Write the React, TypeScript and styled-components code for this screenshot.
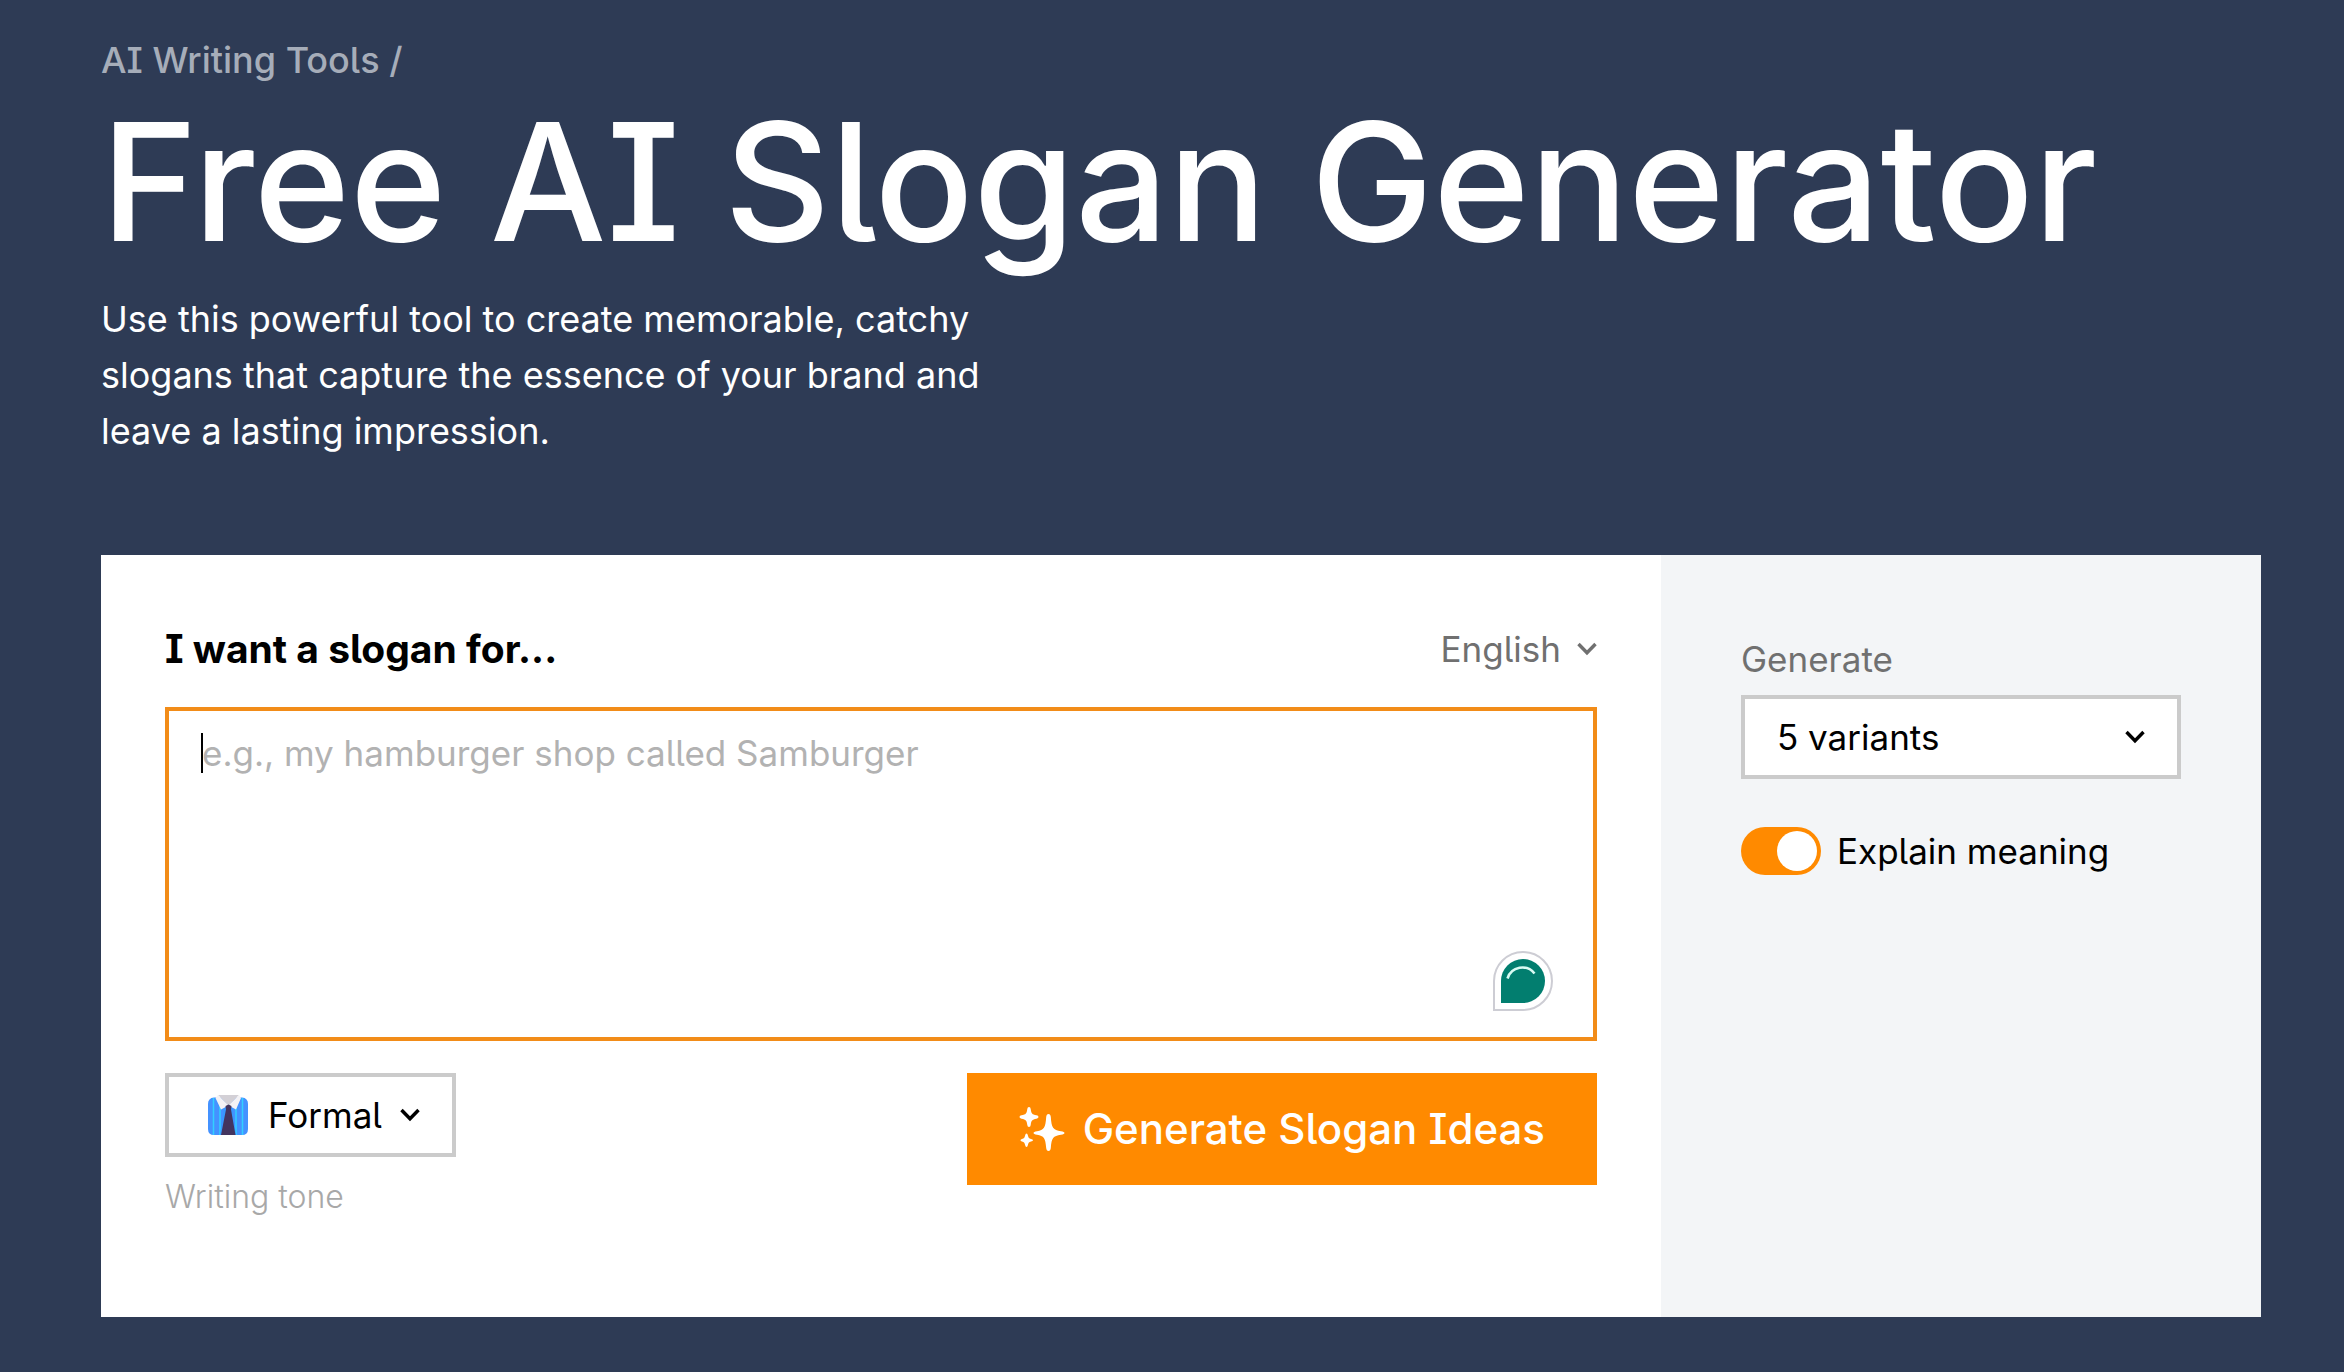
import React, { useState } from 'react';
import styled, { createGlobalStyle } from 'styled-components';

const color = {
  navy: '#2e3b55',
  orange: '#ff8a00',
  focus: '#f28c18',
  border: '#cbcbcb',
  muted: '#707070',
  faint: '#b2b2b2',
  panel: '#f3f5f7',
};

const GlobalStyle = createGlobalStyle`
  *, *::before, *::after { box-sizing: border-box; }
  body {
    margin: 0;
    background: ${color.navy};
    color: #000;
    font-family: Inter, "Liberation Sans", sans-serif;
    font-size: 35px;
    line-height: 48px;
    font-feature-settings: "cv05", "cv08";
  }
  button, select, textarea {
    font: inherit;
    font-feature-settings: inherit;
    color: inherit;
    margin: 0;
    border: 0;
    border-radius: 0;
  }
`;

const Page = styled.main`
  padding: 36px 83px 55px 101px;
`;

const Header = styled.header`
  color: #fff;
`;

const Breadcrumb = styled.nav`
  font-size: 36px;
  font-weight: 500;
  color: #a6adb9;
  a { color: inherit; text-decoration: none; }
`;

const Title = styled.h1`
  margin: 0;
  font-size: 164px;
  line-height: 196px;
  font-weight: 500;
`;

const Intro = styled.p`
  margin: 11px 0 0;
  max-width: 900px;
  font-size: 36px;
  line-height: 56px;
  font-feature-settings: normal;
`;

const Card = styled.form`
  display: flex;
  margin-top: 96px;
  background: #fff;
`;

const Main = styled.section`
  flex: 1;
  min-width: 0;
  padding: 64px 64px 96px;
`;

const Side = styled.aside`
  flex: 0 0 600px;
  padding: 80px;
  background: ${color.panel};
`;

const PromptRow = styled.div`
  display: flex;
  align-items: center;
  justify-content: space-between;
  height: 60px;
  margin-bottom: 28px;
`;

const PromptLabel = styled.label`
  font-size: 39px;
  font-weight: 700;
`;

const Editor = styled.div`
  position: relative;
`;

const TextBox = styled.textarea`
  display: block;
  width: 100%;
  height: 334px;
  padding: 18px 33px;
  border: 4px solid ${color.focus};
  background: #fff;
  resize: none;
  outline: none;
  caret-color: transparent;
  &::placeholder { color: ${color.faint}; opacity: 1; }
`;

const Caret = styled.span`
  position: absolute;
  left: 36px;
  top: 26px;
  width: 2px;
  height: 40px;
  background: #000;
`;

const Assistant = styled.button`
  position: absolute;
  right: 44px;
  bottom: 30px;
  width: 60px;
  height: 60px;
  padding: 0;
  background: none;
  svg { display: block; }
`;

const SelectBox = styled.div<{ $boxed?: boolean }>`
  display: grid;
  grid-template-columns: 1fr;
  align-items: center;
  ${p => p.$boxed && `
    height: 84px;
    border: 4px solid ${color.border};
    background: #fff;
  `}
  > * { grid-area: 1 / 1; }
  > svg { pointer-events: none; }
`;

const Select = styled.select<{ $left?: number; $right: number; $muted?: boolean }>`
  appearance: none;
  field-sizing: content;
  width: 100%;
  height: 100%;
  padding: 0 ${p => p.$right}px 0 ${p => p.$left ?? 0}px;
  background: transparent;
  color: ${p => (p.$muted ? color.muted : '#000')};
  outline: none;
  cursor: pointer;
`;

const ChevronSvg = styled.svg<{ $inset?: number }>`
  justify-self: end;
  margin-right: ${p => p.$inset ?? 0}px;
`;

const ShirtSvg = styled.svg`
  margin-left: 39px;
`;

const Actions = styled.div`
  display: flex;
  align-items: flex-start;
  justify-content: space-between;
  margin-top: 32px;
`;

const Tone = styled.div`
  display: flex;
  flex-direction: column;
  align-items: flex-start;
`;

const ToneLabel = styled.label`
  margin-top: 16px;
  font-size: 32px;
  font-weight: 300;
  color: #a8a8a8;
`;

const Submit = styled.button`
  display: flex;
  align-items: center;
  gap: 18px;
  height: 112px;
  padding: 0 52px;
  background: ${color.orange};
  color: #fff;
  font-size: 42px;
  font-weight: 500;
  cursor: pointer;
`;

const FieldLabel = styled.label`
  display: block;
  margin-bottom: 12px;
  color: ${color.muted};
`;

const ToggleLabel = styled.label`
  display: flex;
  align-items: center;
  gap: 16px;
  margin-top: 48px;
  white-space: nowrap;
`;

const Toggle = styled.input`
  appearance: none;
  display: flex;
  justify-content: flex-start;
  width: 80px;
  height: 48px;
  margin: 0;
  padding: 4px;
  border-radius: 24px;
  background: ${color.border};
  cursor: pointer;
  &::before {
    content: "";
    width: 40px;
    height: 40px;
    border-radius: 50%;
    background: #fff;
  }
  &:checked {
    justify-content: flex-end;
    background: ${color.orange};
  }
`;

const Chevron = ({ inset, stroke = '#000' }: { inset?: number; stroke?: string }) => (
  <ChevronSvg $inset={inset} width="20" height="14" viewBox="0 0 20 14" fill="none" aria-hidden="true">
    <path d="M1.5 2 L10 10.8 L18.5 2" stroke={stroke} strokeWidth="3.4" />
  </ChevronSvg>
);

const Shirt = () => (
  <ShirtSvg width="40" height="40" viewBox="0 0 40 40" aria-hidden="true">
    <path d="M6 2.5 H34 Q40 3 40 9 V34 Q40 40 34 40 H6 Q0 40 0 34 V9 Q0 3 6 2.5Z" fill="#4492ff" />
    <path d="M5.5 3V40M12 10V40M28 10V40M34.5 3V40" stroke="#32d0ff" strokeWidth="1.5" />
    <path d="M16 12 L20 16 L24 12 L28 40 H12Z" fill="#3698ff" />
    <path d="M10 0 H31 L20.5 11Z" fill="#d3d0d6" />
    <path d="M10 0 L7.500 3 L13 14.500 L20.500 10.500Z M31 0 L33 3 L28 14.500 L20.500 10.500Z" fill="#f4f2f5" />
    <path d="M17.500 11 L20.500 9.500 L23.500 11 L23 14.500 L27.500 40 H13 L18 14.500Z" fill="#43355f" />
  </ShirtSvg>
);

const Sparkles = () => (
  <svg width="46" height="48" viewBox="0 0 46 48" fill="#fff" aria-hidden="true">
    <path d="M29.500 9 Q31.500 9 31.800 12 C32.600 23 34 25 42 26.200 Q45.500 26.700 45.500 28 Q45.500 29.300 42 29.800 C34 31 32.600 33 31.800 43 Q31.500 46 29.500 46 Q27.500 46 27.200 43 C26.400 33 25 31 18 29.800 Q14.500 29.300 14.500 28 Q14.500 26.700 18 26.200 C25 25 26.400 23 27.200 12 Q27.500 9 29.500 9Z" />
    <path d="M10 2 Q11.500 2 11.700 4 C12.300 8.500 13 9.500 17.500 10.300 Q19.500 10.600 19.500 12 Q19.500 13.400 17.500 13.700 C13 14.500 12.300 15.500 11.700 20 Q11.500 22 10 22 Q8.500 22 8.300 20 C7.700 15.500 7 14.500 2.500 13.700 Q0.500 13.400 0.500 12 Q0.500 10.600 2.500 10.300 C7 9.500 7.700 8.500 8.300 4 Q8.500 2 10 2Z" />
    <path d="M7.500 28.500 Q8.500 28.500 8.900 30.500 C9.500 33 10 33.400 12 34 Q14 34.600 14 35.200 Q14 36 12 36.500 C10 37 9.500 37.500 8.900 40 Q8.500 42 7.500 42 Q6.500 42 6.100 40 C5.500 37.500 5 37 3 36.500 Q1.500 36 1.500 35.200 Q1.500 34.600 3 34 C5 33.400 5.500 33 6.100 30.500 Q6.500 28.500 7.500 28.500Z" />
  </svg>
);

const Drop = () => (
  <svg width="60" height="60" viewBox="0 0 60 60" fill="none" aria-hidden="true">
    <path d="M1 59 V30 A29 29 0 1 1 30 59Z" fill="#fff" stroke="#cdcdd4" strokeWidth="2" />
    <path d="M8 52 V30 A22 22 0 1 1 30 52Z" fill="#027e6f" />
    <path d="M14.500 27.500 A15.500 15.500 0 0 1 41.500 22.500" stroke="#d8fbf3" strokeWidth="2.600" />
  </svg>
);

export default function App() {
  const [text, setText] = useState('');
  const [explain, setExplain] = useState(true);

  return (
    <>
      <GlobalStyle />
      <Page>
        <Header>
          <Breadcrumb aria-label="Breadcrumb">
            <a href="#tools">AI Writing Tools</a> /
          </Breadcrumb>
          <Title>Free AI Slogan Generator</Title>
          <Intro>
            Use this powerful tool to create memorable, catchy slogans that capture the essence of
            your brand and leave a lasting impression.
          </Intro>
        </Header>

        <Card onSubmit={e => e.preventDefault()}>
          <Main>
            <PromptRow>
              <PromptLabel htmlFor="prompt">I want a slogan for...</PromptLabel>
              <SelectBox>
                <Select aria-label="Language" $right={36} $muted>
                  <option>English</option>
                </Select>
                <Chevron stroke={color.muted} />
              </SelectBox>
            </PromptRow>
            <Editor>
              <TextBox
                id="prompt"
                placeholder="e.g., my hamburger shop called Samburger"
                value={text}
                onChange={e => setText(e.target.value)}
              />
              <Caret />
              <Assistant type="button" aria-label="Writing assistant">
                <Drop />
              </Assistant>
            </Editor>
            <Actions>
              <Tone>
                <SelectBox $boxed>
                  <Shirt />
                  <Select id="tone" $left={99} $right={70}>
                    <option>Formal</option>
                  </Select>
                  <Chevron inset={32} />
                </SelectBox>
                <ToneLabel htmlFor="tone">Writing tone</ToneLabel>
              </Tone>
              <Submit type="submit">
                <Sparkles />
                Generate Slogan Ideas
              </Submit>
            </Actions>
          </Main>
          <Side>
            <FieldLabel htmlFor="variants">Generate</FieldLabel>
            <SelectBox $boxed>
              <Select id="variants" $left={32} $right={70}>
                <option>5 variants</option>
              </Select>
              <Chevron inset={32} />
            </SelectBox>
            <ToggleLabel>
              <Toggle
                type="checkbox"
                role="switch"
                checked={explain}
                onChange={e => setExplain(e.target.checked)}
              />
              Explain meaning
            </ToggleLabel>
          </Side>
        </Card>
      </Page>
    </>
  );
}
